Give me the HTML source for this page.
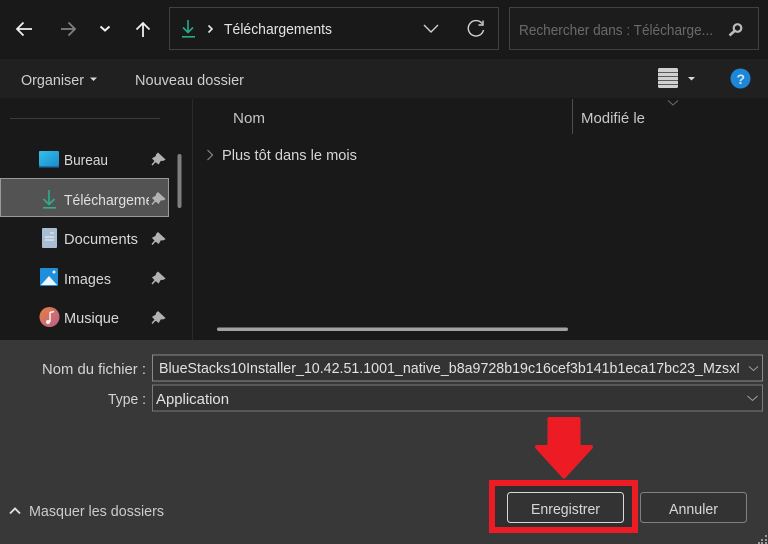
<!DOCTYPE html>
<html lang="fr"><head><meta charset="utf-8"><title>Enregistrer sous</title>
<style>
html,body{margin:0;padding:0;background:#191919;width:768px;height:544px;overflow:hidden}
svg{display:block;filter:blur(0.35px)}
text{font-family:"Liberation Sans",sans-serif;font-size:14.5px}
</style></head><body>
<svg width="768" height="544" viewBox="0 0 768 544" xmlns="http://www.w3.org/2000/svg">
<defs>
<linearGradient id="bl" x1="0" y1="0" x2="1" y2="1"><stop offset="0" stop-color="#35c0ea"/><stop offset="1" stop-color="#1a8ccd"/></linearGradient>
<linearGradient id="mu" x1="0" y1="0" x2="1" y2="1"><stop offset="0" stop-color="#e8803f"/><stop offset="1" stop-color="#b8608f"/></linearGradient>
<clipPath id="cl"><rect x="60" y="185" width="89" height="30"/></clipPath>
<clipPath id="cf"><rect x="155" y="358" width="584" height="22"/></clipPath>
</defs>
<rect width="768" height="544" fill="#191919"/>
<!-- toolbar -->
<rect x="0" y="59" width="768" height="39" fill="#202020"/>
<!-- nav -->
<g fill="none" stroke-width="1.800">
<path d="M32 29H17M23.500 22.500L17 29L23.500 35.500" stroke="#f0f0f0"/>
<path d="M61 29H75M68.500 22.500L75 29L68.500 35.500" stroke="#808080"/>
<path d="M100.500 26.500L105 30.500L109.500 26.500" stroke="#eeeeee" stroke-width="2"/>
<path d="M143 37V23M136.500 29.500L143 23L149.500 29.500" stroke="#f0f0f0"/>
</g>
<!-- address -->
<rect x="169.500" y="7.500" width="329" height="42" fill="#191919" stroke="#414141"/>
<path d="M188 20V32M183 27.500L188 32.500L193 27.500" fill="none" stroke="#2ba98a" stroke-width="1.600"/>
<rect x="182" y="36" width="13" height="1.600" fill="#2ba98a"/>
<path d="M208.500 25.500L212 29L208.500 32.500" fill="none" stroke="#e6e6e6" stroke-width="1.600"/>
<text x="224" y="34" textLength="108" lengthAdjust="spacingAndGlyphs" fill="#e4e4e4">Téléchargements</text>
<path d="M424 25L431 32L438 25" fill="none" stroke="#d0d0d0" stroke-width="1.400"/>
<path d="M482 23.500A7.700 7.700 0 1 0 483.500 30" fill="none" stroke="#d4d4d4" stroke-width="1.400"/>
<path d="M483 20.500V25H478.500" fill="none" stroke="#d4d4d4" stroke-width="1.400"/>
<!-- search -->
<rect x="509.500" y="7.500" width="249" height="42" fill="#1c1c1c" stroke="#414141"/>
<text x="519" y="35" textLength="194" lengthAdjust="spacingAndGlyphs" fill="#6a6a6a">Rechercher dans : Télécharge...</text>
<circle cx="737.500" cy="28" r="3.800" fill="none" stroke="#bcbcbc" stroke-width="2.200"/>
<path d="M734.500 31L729.500 35.500" stroke="#bcbcbc" stroke-width="2.600"/>
<!-- toolbar content -->
<text x="21" y="85" textLength="63" lengthAdjust="spacingAndGlyphs" fill="#cfcfcf">Organiser</text>
<path d="M90 77.500H97L93.500 81Z" fill="#d8d8d8"/>
<text x="135" y="85" textLength="109" lengthAdjust="spacingAndGlyphs" fill="#cfcfcf">Nouveau dossier</text>
<rect x="658" y="68" width="20" height="20" rx="1.500" fill="#d0d0d0"/>
<path d="M658 72.500H678M658 76.500H678M658 80.500H678M658 84.500H678" stroke="#5a5a5a" stroke-width="1"/>
<path d="M688 77H695L691.500 80.500Z" fill="#d8d8d8"/>
<circle cx="740.500" cy="78.500" r="10" fill="#1d86d6"/>
<text x="736.500" y="84" style="font-size:14px;font-weight:bold" fill="#cfe6f8">?</text>
<!-- headers -->
<path d="M668 100.500L673 105L678 100.500" fill="none" stroke="#6e6e6e"/>
<rect x="572" y="99" width="1" height="35" fill="#4c4c4c"/>
<text x="233" y="123" textLength="32" lengthAdjust="spacingAndGlyphs" fill="#c4c4c4">Nom</text>
<text x="581" y="123" textLength="64" lengthAdjust="spacingAndGlyphs" fill="#c8c8c8">Modifié le</text>
<!-- dividers -->
<rect x="192" y="99" width="1" height="241" fill="#2a2a2a"/>
<rect x="10" y="118" width="150" height="1" fill="#3c3c3c"/>
<!-- list -->
<path d="M207.500 150L212.500 155L207.500 160" fill="none" stroke="#8c8c8c" stroke-width="1.100"/>
<text x="222" y="160" textLength="135" lengthAdjust="spacingAndGlyphs" fill="#d6d6d6">Plus tôt dans le mois</text>
<rect x="217" y="327.500" width="351" height="3.500" rx="1.700" fill="#a2a2a2"/>
<!-- sidebar selection -->
<rect x="0.500" y="178.500" width="168" height="38" fill="#535353" stroke="#9a9a9a"/>
<rect x="177.500" y="154" width="4" height="54" rx="2" fill="#7f7f7f"/>
<!-- Bureau -->
<rect x="39" y="151" width="20" height="15" rx="1" fill="url(#bl)"/>
<rect x="39" y="166" width="20" height="1.500" fill="#1a6fa8"/>
<text x="64" y="165" textLength="44" lengthAdjust="spacingAndGlyphs" fill="#d8d8d8">Bureau</text>
<!-- Téléchargements -->
<path d="M49 190V204M43.500 199L49 204.500L54.500 199" fill="none" stroke="#2fae8c" stroke-width="1.600"/>
<rect x="43" y="207" width="13" height="1.600" fill="#2fae8c"/>
<text x="64" y="205" clip-path="url(#cl)" textLength="108" lengthAdjust="spacingAndGlyphs" fill="#e0e0e0">Téléchargements</text>
<!-- Documents -->
<rect x="42" y="228" width="15" height="20" rx="1" fill="#a9bdd4"/>
<path d="M50 233H54M45 237H54M45 240H54" stroke="#eef3f8" stroke-width="1"/>
<text x="64" y="244" textLength="74" lengthAdjust="spacingAndGlyphs" fill="#d8d8d8">Documents</text>
<!-- Images -->
<rect x="40" y="268" width="18" height="18" rx="1" fill="#1f8fdc"/>
<path d="M41 285L49 276L57 285Z" fill="#f2f7fb"/>
<circle cx="54" cy="272" r="1.500" fill="#e6f4fd"/>
<text x="64" y="284" textLength="47" lengthAdjust="spacingAndGlyphs" fill="#d8d8d8">Images</text>
<!-- Musique -->
<circle cx="49.500" cy="317" r="10" fill="url(#mu)"/>
<path d="M50 322V312.500L54 311.500" fill="none" stroke="#f5eef0" stroke-width="1.500"/>
<circle cx="48" cy="322" r="2" fill="#f5eef0"/>
<text x="64" y="323" textLength="55" lengthAdjust="spacingAndGlyphs" fill="#d8d8d8">Musique</text>
<!-- pins -->
<g fill="#b2b2b2" stroke="#b2b2b2" stroke-width="0.800" stroke-linejoin="round">
<path d="M158 153L165 159.500L163 160.500L160.500 160.500L158.500 164L155.500 161.500L152.500 165L152 164.500L155 161L152.500 158.500L156 156.500L156.500 154.500Z"/>
<path transform="translate(0,39.500)" d="M158 153L165 159.500L163 160.500L160.500 160.500L158.500 164L155.500 161.500L152.500 165L152 164.500L155 161L152.500 158.500L156 156.500L156.500 154.500Z"/>
<path transform="translate(0,79.500)" d="M158 153L165 159.500L163 160.500L160.500 160.500L158.500 164L155.500 161.500L152.500 165L152 164.500L155 161L152.500 158.500L156 156.500L156.500 154.500Z"/>
<path transform="translate(0,119)" d="M158 153L165 159.500L163 160.500L160.500 160.500L158.500 164L155.500 161.500L152.500 165L152 164.500L155 161L152.500 158.500L156 156.500L156.500 154.500Z"/>
<path transform="translate(0,158.500)" d="M158 153L165 159.500L163 160.500L160.500 160.500L158.500 164L155.500 161.500L152.500 165L152 164.500L155 161L152.500 158.500L156 156.500L156.500 154.500Z"/>
</g>
<!-- bottom panel -->
<rect x="0" y="340" width="768" height="204" fill="#383838"/>
<text x="42" y="374" textLength="104" lengthAdjust="spacingAndGlyphs" fill="#d4d4d4">Nom du fichier :</text>
<text x="108" y="404" textLength="38" lengthAdjust="spacingAndGlyphs" fill="#d4d4d4">Type :</text>
<rect x="152.500" y="355" width="610" height="26" fill="#333333" stroke="#8a8a8a"/>
<rect x="152.500" y="385" width="610" height="26" fill="#333333" stroke="#7a7a7a"/>
<g clip-path="url(#cf)"><text x="159" y="373" textLength="597" lengthAdjust="spacingAndGlyphs" fill="#e2e2e2">BlueStacks10Installer_10.42.51.1001_native_b8a9728b19c16cef3b141b1eca17bc23_MzsxMg</text></g>
<text x="156" y="404" textLength="73" lengthAdjust="spacingAndGlyphs" fill="#e2e2e2">Application</text>
<path d="M749 366.500L753.500 370.500L758 366.500" fill="none" stroke="#a0a0a0"/>
<path d="M747.500 396L752.500 400.500L757.500 396" fill="none" stroke="#a0a0a0"/>
<path d="M10 513.500L15 508.500L20 513.500" fill="none" stroke="#e0e0e0" stroke-width="1.900"/>
<text x="29" y="516" textLength="135" lengthAdjust="spacingAndGlyphs" fill="#cccccc">Masquer les dossiers</text>
<!-- red annotation -->
<path d="M549.500 419H578.500V447H591L564 476.500L537 447H549.500Z" fill="#ed1c24" stroke="#ed1c24" stroke-width="4" stroke-linejoin="round"/>
<rect x="492" y="483" width="143" height="47" fill="#2f2f2f" stroke="#ed1c24" stroke-width="6"/>
<!-- buttons -->
<rect x="507.500" y="492.500" width="116" height="30" rx="3" fill="#333333" stroke="#d8d8d8"/>
<text x="531" y="514" textLength="69" lengthAdjust="spacingAndGlyphs" fill="#d8d8d8">Enregistrer</text>
<rect x="640.500" y="492.500" width="106" height="30" rx="3" fill="#333333" stroke="#808080"/>
<text x="669" y="514" textLength="49" lengthAdjust="spacingAndGlyphs" fill="#d8d8d8">Annuler</text>
<!-- grip -->
<g fill="#9a9a9a"><rect x="765" y="535" width="2" height="2"/><rect x="765" y="539" width="2" height="2"/><rect x="761" y="539" width="2" height="2"/><rect x="765" y="542" width="2" height="2"/><rect x="761" y="542" width="2" height="2"/><rect x="758" y="542" width="2" height="2"/></g>
</svg>
</body></html>
